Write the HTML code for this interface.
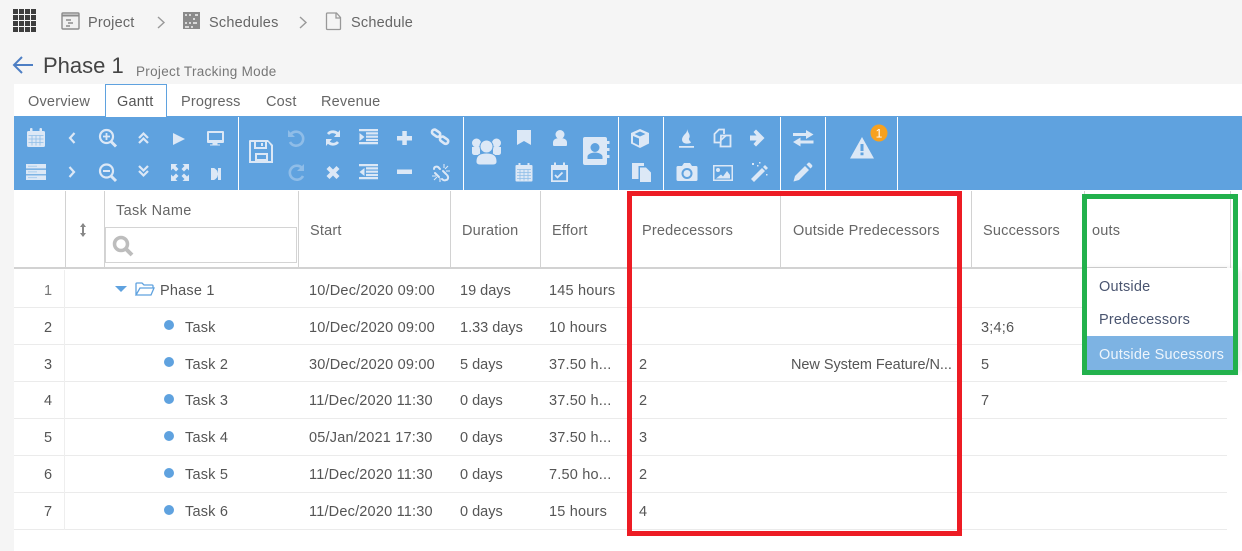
<!DOCTYPE html>
<html><head><meta charset="utf-8"><style>
html,body{margin:0;padding:0}
body{width:1242px;height:551px;overflow:hidden;position:relative;background:#f5f5f5;font-family:"Liberation Sans",sans-serif;color:#555}
div,span.t{position:absolute}
.t{white-space:nowrap;font-size:14.5px;line-height:20px;letter-spacing:.2px;color:#555;margin-top:2px}
.h{color:#666}
.ln{background:#d2d2d2}
.r{background:#ebebeb;left:14px;width:1213px;height:1px}
</style></head><body>
<div style="left:14px;top:84px;width:1228px;height:467px;background:#fff"></div>
<div style="left:14px;top:116px;width:1228px;height:74px;background:#5fa2df"></div>
<div style="left:105px;top:84px;width:62px;height:33px;background:#fff;border:1px solid #5fa2df;border-bottom:0;box-sizing:border-box"></div>

<span class="t" style="left:88px;top:11px;color:#666">Project</span>
<span class="t" style="left:209px;top:11px;color:#666">Schedules</span>
<span class="t" style="left:351px;top:11px;color:#666">Schedule</span>
<span class="t" style="left:43px;top:49px;font-size:22px;line-height:30px;color:#444;letter-spacing:0">Phase 1</span>
<span class="t" style="left:136px;top:60px;font-size:13.5px;color:#777;letter-spacing:.3px">Project Tracking Mode</span>
<span class="t" style="left:28px;top:90px;color:#666">Overview</span>
<span class="t" style="left:117px;top:90px;color:#555">Gantt</span>
<span class="t" style="left:181px;top:90px;color:#666">Progress</span>
<span class="t" style="left:266px;top:90px;color:#666">Cost</span>
<span class="t" style="left:321px;top:90px;color:#666">Revenue</span>

<!-- toolbar separators -->
<div style="left:238px;top:117px;width:1px;height:73px;background:#fff"></div>
<div style="left:463px;top:117px;width:1px;height:73px;background:#fff"></div>
<div style="left:618px;top:117px;width:1px;height:73px;background:#fff"></div>
<div style="left:663px;top:117px;width:1px;height:73px;background:#fff"></div>
<div style="left:780px;top:117px;width:1px;height:73px;background:#fff"></div>
<div style="left:825px;top:117px;width:1px;height:73px;background:#fff"></div>
<div style="left:897px;top:117px;width:1px;height:73px;background:#fff"></div>

<!-- header lines -->
<div class="ln" style="left:14px;top:267px;width:1213px;height:2px"></div>
<div class="ln" style="left:65px;top:191px;width:1px;height:77px"></div>
<div class="ln" style="left:104px;top:191px;width:1px;height:77px"></div>
<div class="ln" style="left:298px;top:191px;width:1px;height:77px"></div>
<div class="ln" style="left:450px;top:191px;width:1px;height:77px"></div>
<div class="ln" style="left:540px;top:191px;width:1px;height:77px"></div>
<div class="ln" style="left:780px;top:191px;width:1px;height:77px"></div>
<div class="ln" style="left:971px;top:191px;width:1px;height:77px"></div>
<div class="ln" style="left:1084px;top:191px;width:1px;height:77px"></div>
<div class="ln" style="left:1230px;top:191px;width:1px;height:77px"></div>
<div style="left:105px;top:227px;width:190px;height:34px;border:1px solid #d4d4d4"></div>

<!-- row lines -->
<div class="r" style="top:307px"></div>
<div class="r" style="top:344px"></div>
<div class="r" style="top:381px"></div>
<div class="r" style="top:418px"></div>
<div class="r" style="top:455px"></div>
<div class="r" style="top:492px"></div>
<div class="r" style="top:529px"></div>
<div style="left:64px;top:270px;width:1px;height:260px;background:#eee"></div>

<span class="t h" style="left:116px;top:199px;letter-spacing:.35px">Task Name</span>
<span class="t h" style="left:310px;top:219px">Start</span>
<span class="t h" style="left:462px;top:219px">Duration</span>
<span class="t h" style="left:552px;top:219px">Effort</span>
<span class="t h" style="left:642px;top:219px">Predecessors</span>
<span class="t h" style="left:793px;top:219px">Outside Predecessors</span>
<span class="t h" style="left:983px;top:219px">Successors</span>
<span class="t h" style="left:1092px;top:219px">outs</span>

<!-- rows -->
<span class="t" style="left:44px;top:279px;color:#777">1</span>
<span class="t" style="left:160px;top:279px">Phase 1</span>
<span class="t" style="left:309px;top:279px">10/Dec/2020 09:00</span>
<span class="t" style="left:460px;top:279px;letter-spacing:0">19 days</span>
<span class="t" style="left:549px;top:279px">145 hours</span>

<span class="t" style="left:44px;top:316px">2</span>
<span class="t" style="left:185px;top:316px">Task</span>
<span class="t" style="left:309px;top:316px">10/Dec/2020 09:00</span>
<span class="t" style="left:460px;top:316px;letter-spacing:0">1.33 days</span>
<span class="t" style="left:549px;top:316px">10 hours</span>
<span class="t" style="left:981px;top:316px">3;4;6</span>

<span class="t" style="left:44px;top:353px">3</span>
<span class="t" style="left:185px;top:353px">Task 2</span>
<span class="t" style="left:309px;top:353px">30/Dec/2020 09:00</span>
<span class="t" style="left:460px;top:353px;letter-spacing:0">5 days</span>
<span class="t" style="left:549px;top:353px">37.50 h...</span>
<span class="t" style="left:639px;top:353px">2</span>
<span class="t" style="left:791px;top:353px;letter-spacing:-.05px">New System Feature/N...</span>
<span class="t" style="left:981px;top:353px">5</span>

<span class="t" style="left:44px;top:389px">4</span>
<span class="t" style="left:185px;top:389px">Task 3</span>
<span class="t" style="left:309px;top:389px">11/Dec/2020 11:30</span>
<span class="t" style="left:460px;top:389px;letter-spacing:0">0 days</span>
<span class="t" style="left:549px;top:389px">37.50 h...</span>
<span class="t" style="left:639px;top:389px">2</span>
<span class="t" style="left:981px;top:389px">7</span>

<span class="t" style="left:44px;top:426px">5</span>
<span class="t" style="left:185px;top:426px">Task 4</span>
<span class="t" style="left:309px;top:426px">05/Jan/2021 17:30</span>
<span class="t" style="left:460px;top:426px;letter-spacing:0">0 days</span>
<span class="t" style="left:549px;top:426px">37.50 h...</span>
<span class="t" style="left:639px;top:426px">3</span>

<span class="t" style="left:44px;top:463px">6</span>
<span class="t" style="left:185px;top:463px">Task 5</span>
<span class="t" style="left:309px;top:463px">11/Dec/2020 11:30</span>
<span class="t" style="left:460px;top:463px;letter-spacing:0">0 days</span>
<span class="t" style="left:549px;top:463px">7.50 ho...</span>
<span class="t" style="left:639px;top:463px">2</span>

<span class="t" style="left:44px;top:500px">7</span>
<span class="t" style="left:185px;top:500px">Task 6</span>
<span class="t" style="left:309px;top:500px">11/Dec/2020 11:30</span>
<span class="t" style="left:460px;top:500px;letter-spacing:0">0 days</span>
<span class="t" style="left:549px;top:500px">15 hours</span>
<span class="t" style="left:639px;top:500px">4</span>

<!-- dropdown -->
<div style="left:1087px;top:268px;width:151px;height:102px;background:#fff;box-shadow:0 2px 6px rgba(0,0,0,.18)"></div>
<div style="left:1087px;top:336px;width:151px;height:34px;background:#7db3e3"></div>
<span class="t" style="left:1099px;top:275px;color:#4a5570">Outside</span>
<span class="t" style="left:1099px;top:308px;color:#4a5570">Predecessors</span>
<span class="t" style="left:1099px;top:343px;color:#eef5fc">Outside Sucessors</span>

<!-- highlight boxes -->
<div style="left:627px;top:191px;width:335px;height:345px;border:5px solid #ed1c24;box-sizing:border-box"></div>
<div style="left:1082px;top:194px;width:156px;height:181px;border:5px solid #22b14c;box-sizing:border-box"></div>

<svg width="1242" height="551" viewBox="0 0 1242 551" style="position:absolute;left:0;top:0">
<!-- app grid -->
<g fill="#3d3d3d">
<path d="M13 9h5v5h-5zM19 9h5v5h-5zM25 9h5v5h-5zM31 9h5v5h-5zM13 15h5v5h-5zM19 15h5v5h-5zM25 15h5v5h-5zM31 15h5v5h-5zM13 21h5v5h-5zM19 21h5v5h-5zM25 21h5v5h-5zM31 21h5v5h-5zM13 27h5v5h-5zM19 27h5v5h-5zM25 27h5v5h-5zM31 27h5v5h-5z"/>
</g>
<!-- project icon -->
<g fill="none" stroke="#8c8c8c" stroke-width="1.400"><rect x="62" y="13" width="17" height="16" rx="1" fill="#f0f0f0"/><path d="M62 15.500h17" stroke-width="2"/><path d="M66 20h5M68 23h5M66 26h4"/></g>
<path d="M158 17l6 5.500-6 5.500M300 17l6 5.500-6 5.500" fill="none" stroke="#999" stroke-width="1.400"/>
<!-- schedules -->
<rect x="183" y="12" width="17" height="17" fill="#8a8a8a"/>
<path d="M185 14h2v2h-2zM189 14h2v2h-2zM193 18h2v2h-2zM185 22h2v2h-2zM189 22h2v2h-2zM193 22h4v2h-4zM185 26h4v2h-4zM191 26h2v2h-2zM195 14h3v2h-3z" fill="#d8d8d8"/>
<!-- doc -->
<path d="M327.500 13h9l4 4.500v11a1 1 0 0 1-1 1h-12a1 1 0 0 1-1-1v-14.500a1 1 0 0 1 1-1zM336 13v5h4.500" fill="none" stroke="#999" stroke-width="1.300"/>
<!-- back arrow -->
<path d="M33 65H15M22 57l-8 8 8 8" fill="none" stroke="#4e7fc4" stroke-width="2"/>

<g fill="#dce8f6" stroke="none">
<!-- calendar (filled) -->
<rect x="27" y="131" width="18" height="16" rx="1.500"/><rect x="30" y="128" width="2.500" height="5" rx="1"/><rect x="39.500" y="128" width="2.500" height="5" rx="1"/>
<path d="M28.500 135.500h15M28.500 139h15M28.500 142.500h15M32 135.500v10M36 135.500v10M40 135.500v10" stroke="#8fbde8" stroke-width=".8" fill="none"/>
<!-- server -->
<path d="M26 164h20v4.500H26zM26 169.700h20v4.500H26zM26 175.400h20v4.600H26z"/>
<path d="M28 165.700h9v1h-9zM28 171.400h9v1h-9zM28 177.100h9v1h-9z" fill="#a9cdee"/>
<!-- plus / minus -->
<path d="M397 136h15v4.500h-15zM402.300 131h4.500v14h-4.500z"/>
<path d="M397 169.500h15v4.500h-15z"/>
<!-- play -->
<path d="M173 133l12 6-12 6z"/>
<!-- step -->
<path d="M211 168h3v12h-3zM214.500 168l3 3v6l-3 3zM218 168h3v12h-3z"/>
<path d="M214 168l5 6-5 6z"/>
<!-- monitor -->
<path fill-rule="evenodd" d="M208 131h15a1 1 0 0 1 1 1v10a1 1 0 0 1-1 1h-5.500v1.500h2.500v1h-10v-1h2.500V143H208a1 1 0 0 1-1-1v-10a1 1 0 0 1 1-1zm1 2v7h13v-7z"/>
<!-- expand -->
<path d="M171 164h6.500l-2 2 3 3-2.500 2.500-3-3-2 2zM189 164h-6.500l2 2-3 3 2.500 2.500 3-3 2 2zM171 181h6.500l-2-2 3-3-2.500-2.500-3 3-2-2zM189 181h-6.500l2-2-3-3 2.500-2.500 3 3 2-2z"/>
<!-- x -->
<path d="M326.500 169l3-3 3.500 3.500 3.500-3.500 3 3-3.500 3.500 3.500 3.500-3 3-3.500-3.500-3.500 3.500-3-3 3.500-3.500z"/>
<!-- indent -->
<path d="M359 129h19v2.200h-19zM366 132.300h12v2.200h-12zM366 135.600h12v2.200h-12zM366 138.900h12v2.200h-12zM359 142h19v2.200h-19zM359.500 133v8l5-4z"/>
<path d="M359 164h19v2.200h-19zM366 167.300h12v2.200h-12zM366 170.600h12v2.200h-12zM366 173.900h12v2.200h-12zM359 177h19v2.200h-19zM364.500 168v8l-5-4z"/>
<!-- bookmark -->
<path d="M517 130h14v15l-7-4-7 4z"/>
<!-- user -->
<circle cx="560" cy="134.500" r="4.500"/><path d="M553 145v-2.500c0-3 3-4.500 7-4.500s7 1.500 7 4.500v2.500a1 1 0 0 1-1 1h-12a1 1 0 0 1-1-1z"/>
<!-- users -->
<circle cx="476.500" cy="143" r="4.500"/><circle cx="496.500" cy="143" r="4.500"/><path d="M472 147h8v8h-6a2.500 2.500 0 0 1-2-2.500zM493 147h8v5.500a2.500 2.500 0 0 1-2 2.500h-6z"/>
<circle cx="486.500" cy="146.500" r="6.500" stroke="#5fa2df" stroke-width="1"/><path d="M476 161c0-6 4-8 10.500-8s10.500 2 10.500 8v1c0 2-2 3-4 3h-13c-2 0-4-1-4-3z" stroke="#5fa2df" stroke-width="1"/>
<!-- address book -->
<path fill-rule="evenodd" d="M585 137h20a2 2 0 0 1 2 2v24a2 2 0 0 1-2 2h-20a2 2 0 0 1-2-2v-24a2 2 0 0 1 2-2zm10 6a4.500 4.500 0 1 0 0 9 4.500 4.500 0 0 0 0-9zm-7.500 16h15v-2.500c0-2-3.500-4-7.500-4s-7.500 2-7.500 4z"/>
<path d="M607 141h2.500v3H607zM607 148h2.500v3H607zM607 155h2.500v3H607z"/>
<!-- cal small -->
<rect x="515.500" y="165" width="17" height="16.500" rx="1"/><rect x="518.500" y="163" width="2" height="4"/><rect x="527.500" y="163" width="2" height="4"/>
<path d="M517 169.500h14M517 172.500h14M517 175.500h14M517 178.500h14M520 169.500v11M524 169.500v11M528 169.500v11" stroke="#8fbde8" stroke-width=".8" fill="none"/>
<!-- cal check -->
<path fill-rule="evenodd" d="M551 165h3v-2.500h2v2.500h7v-2.500h2v2.500h3v17h-17zm1.800 5v10.200h13.400V170z"/>
<path d="M555 175l2.500 2.500 5-5" fill="none" stroke="#dce8f6" stroke-width="1.800"/>
<!-- cube -->
<path fill-rule="evenodd" d="M640 129l9 4v10.500l-9 4.500-9-4.500V133zm0 2.500l-5.500 2.500 5.500 2.500 5.500-2.500zM633 136v6.500l6 3V138.500z"/>
<!-- files -->
<path d="M632 163h12v3h-5.500v13H632z"/><path fill-rule="evenodd" d="M640 167.500h6l5 5v9.500h-11z"/>
<!-- fire -->
<path d="M687 129c1 3.500 2 4 2.500 6 .7 3-1 3-.5 4.500 .4 1.300 1.500 2 2 3-1.500 1.500-7 1.800-8.500-1-1.500-3 1-6 3-8 1.500-1.500 1.700-3 1.500-4.500zM679 146h15v1.700h-15z"/>
<!-- arrow -->
<path d="M750 135.500h6.500l-3-3.500 2.500-2.500 8.500 8.500-8.500 8.500-2.500-2.500 3-3.500H750z"/>
<!-- camera -->
<path fill-rule="evenodd" d="M678 166h4l2-3h6l2 3h4a1.500 1.500 0 0 1 1.500 1.500v12a1.500 1.500 0 0 1-1.500 1.500h-18a1.500 1.500 0 0 1-1.500-1.500v-12a1.500 1.500 0 0 1 1.500-1.500zm9 2a5.500 5.500 0 1 0 0 11 5.500 5.500 0 0 0 0-11zm0 2a3.500 3.500 0 1 1 0 7 3.500 3.500 0 0 1 0-7z"/>
<!-- image -->
<path fill-rule="evenodd" d="M713 165h20v16h-20zm1.500 1.500v13h17v-13z"/>
<circle cx="718" cy="170" r="2"/><path d="M716 178.500l5-4 2 2 4-5.500 3 4v3.500z"/>
<!-- wand -->
<path d="M751 179l11-11 3 3-11 11zM763 167l2-2 3 3-2 2z"/>
<path d="M752 163h2v2h-2zM757 165h1.500v1.500H757zM766 174h1.500v1.500H766zM759 162h1.500v1.500H759z"/>
<!-- exchange -->
<path d="M793 133h13v-3l7.500 4.500-7.500 4.500v-3h-13zM813.500 140.500h-13v-3l-7.500 4.500 7.500 4.500v-3h13z"/>
<!-- pencil -->
<path d="M795 176l10-10 4 4-10 10-5.500 1.500zM806.500 164.500l1.500-1.500a1.500 1.500 0 0 1 2 0l2 2a1.500 1.500 0 0 1 0 2l-1.500 1.500z"/>
<!-- warning -->
<path fill-rule="evenodd" d="M862 137l12 21.500h-24zm-1.500 7v7h3v-7zm0 8.500v2.800h3v-2.800z"/>
</g>
<!-- copy -->
<g fill="none" stroke="#dce8f6" stroke-width="1.800">
<path d="M724 134v-4.500h-5l-4.500 4.500v8.500h6.500"/><path d="M721 135.500h5l4.500 0v11h-10z"/><path d="M726 135.500l-5 4.500"/>
</g>
<!-- link -->
<g fill="none" stroke="#dce8f6" stroke-width="2.600" stroke-linecap="round">
<rect x="-5" y="-2.500" width="9" height="5" rx="2.500" transform="translate(436.500 133.500) rotate(35)"/>
<rect x="-5" y="-2.500" width="9" height="5" rx="2.500" transform="translate(444.500 140.500) rotate(35)"/>
<path d="M434 169c0-3 4-3 5-1l1 1M447 175c2 2 1 5-1 5-2 1-3 0-4-1M439 177l-4-4M443 171l3 3" stroke-width="2"/>
</g>
<path fill="none" stroke="#dce8f6" stroke-width="1.100" d="M444 164v4M448 166l-3 3M450 171h-4M432 176h4M434 180l3-3M440 182v-4"/>
<!-- save -->
<path fill="#dce8f6" fill-rule="evenodd" d="M250 140h18l5 5v18h-24v-22a1 1 0 0 1 1-1zm1 2v19h20v-15l-3-4h-1v7h-13v-7zm5 0v5h9v-5zm-1 11h13v8h-13zm2 2v4h9v-4z"/>
<path d="M261 143h2v3h-2z" fill="#dce8f6"/>
<!-- strokes -->
<g fill="none" stroke="#dce8f6" stroke-width="2.200">
<path d="M74.500 133l-4.500 5 4.500 5M69.500 167l4.500 5-4.500 5"/>
<circle cx="106.500" cy="136.500" r="6.500"/><path d="M111 141.500l5 5" stroke-width="3"/><path d="M103 136.500h7M106.500 133v7" stroke-width="1.800"/>
<circle cx="106.500" cy="171" r="6.500"/><path d="M111 176l5 5" stroke-width="3"/><path d="M103 171h7" stroke-width="2"/>
<path d="M139 138l4.500-4.500 4.500 4.500M139 143l4.500-4.500 4.500 4.500M139 166l4.500 4.500 4.500-4.500M139 171l4.500 4.500 4.500-4.500"/>
<path d="M328 134a6.500 6.500 0 0 1 10.500 1M338 142a6.500 6.500 0 0 1-10.500-1" stroke-width="2.800"/>
</g>
<path d="M340 130v7h-6zM326 146v-7h6z" fill="#dce8f6"/>
<g fill="none" stroke="#8fbde8" stroke-width="2.600">
<path d="M291 134a7 7 0 1 1-1 8"/>
<path d="M302 168a7 7 0 1 0 1 8"/>
</g>
<path d="M288 130v7h7zM304 164v7h-7z" fill="#8fbde8"/>
<circle cx="879" cy="133" r="8.500" fill="#f7a11f"/>
<text x="879" y="137.500" font-family="Liberation Sans" font-size="12" fill="#fff" text-anchor="middle">1</text>
<!-- sort icon -->
<path d="M83 224v12" stroke="#888" stroke-width="2"/><path d="M80 227l3-4 3 4zM80 233l3 4 3-4z" fill="#888"/>
<!-- search -->
<circle cx="121" cy="244" r="6.500" fill="none" stroke="#bdbdbd" stroke-width="3.500"/><path d="M126 249l6 6" stroke="#bdbdbd" stroke-width="4"/>
<!-- caret, folder -->
<path d="M115 286h12l-6 6z" fill="#5fa2df"/>
<path d="M136 295v-11a1 1 0 0 1 1-1h5l2 2h8a1 1 0 0 1 1 1v2M136 295l4-7h14l-3 7z" fill="none" stroke="#5fa2df" stroke-width="1.300"/>
<g fill="#5fa2df"><circle cx="169" cy="325" r="5"/><circle cx="169" cy="362" r="5"/><circle cx="169" cy="399" r="5"/><circle cx="169" cy="436" r="5"/><circle cx="169" cy="473" r="5"/><circle cx="169" cy="510" r="5"/></g>
</svg>
</body></html>
